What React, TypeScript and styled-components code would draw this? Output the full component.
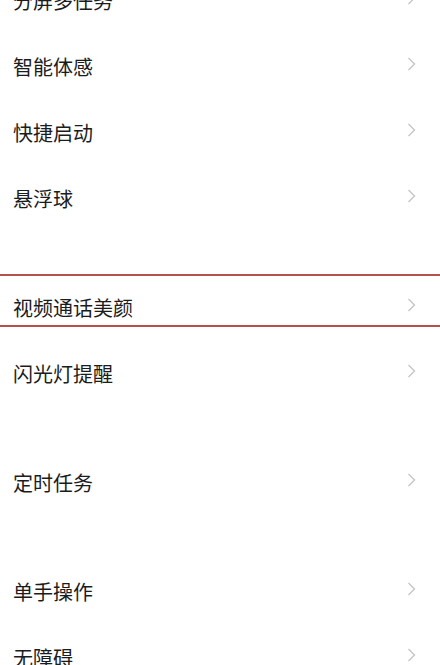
import React from "react";
import styled, { createGlobalStyle } from "styled-components";

const GlobalStyle = createGlobalStyle`
  html, body {
    margin: 0;
    padding: 0;
    background: #ffffff;
    overflow: hidden;
  }
  body {
    font-family: "Noto Sans CJK SC", "Noto Sans", sans-serif;
  }
`;

// groups of settings rows, split by a blank gap
const groups: string[][] = [
  ["分屏多任务", "智能体感", "快捷启动", "悬浮球"],
  ["视频通话美颜", "闪光灯提醒"],
  ["定时任务"],
  ["单手操作", "无障碍"],
];

const highlighted = "视频通话美颜";

const Page = styled.div`
  width: 440px;
  height: 665px;
  overflow: hidden;
  background: #fff;
`;

const List = styled.div`
  margin-top: -33px;
  display: flex;
  flex-direction: column;
  gap: 43px;
`;

const Group = styled.div`
  display: flex;
  flex-direction: column;
`;

const Row = styled.div`
  position: relative;
  height: 66px;
  display: flex;
  align-items: center;
  justify-content: space-between;
  padding: 0 24px 0 13px;
`;

const Label = styled.span`
  font-size: 20px;
  color: #1c1c1c;
  letter-spacing: 0;
  line-height: 1;
  margin-top: 1px;
`;

// hand-drawn red annotation lines over the row
const Mark = styled.div`
  position: absolute;
  left: 0;
  right: 0;
  top: 0;
  height: 49px;
  border-top: 2px solid #b5514d;
  border-bottom: 2px solid #b5514d;
  pointer-events: none;
`;

const Chevron = () => (
  <svg width="9" height="14" viewBox="0 0 9 14" style={{ marginTop: -4 }}>
    <path d="M1.5 1 L7.5 7 L1.5 13" fill="none" stroke="#c4c4c4" strokeWidth="1.3" />
  </svg>
);

export default function App() {
  return (
    <Page>
      <GlobalStyle />
      <List>
        {groups.map((g, i) => (
          <Group key={i}>
            {g.map((name) => (
              <Row key={name}>
                {name === highlighted && <Mark />}
                <Label>{name}</Label>
                <Chevron />
              </Row>
            ))}
          </Group>
        ))}
      </List>
    </Page>
  );
}
